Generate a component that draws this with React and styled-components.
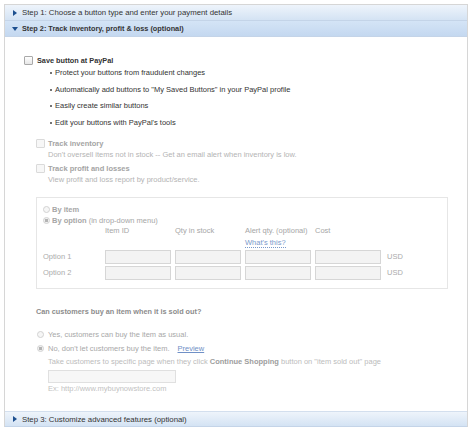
import React from "react";
import styled, { createGlobalStyle, css } from "styled-components";

const GlobalStyle = createGlobalStyle`
  html, body { margin: 0; padding: 0; background: #fff; }
  body {
    font-family: "Liberation Sans", Arial, sans-serif;
    font-size: 7.5px;
    color: #333;
  }
  * { box-sizing: border-box; }
`;

const Page = styled.div`
  padding: 4px 0 0 4px;
`;

const Frame = styled.div`
  width: 464px;
  height: 423px;
  border: 1px solid #d6d6d6;
  border-bottom: none;
  display: flex;
  flex-direction: column;
`;

const StepHeader = styled.div`
  display: flex;
  align-items: center;
  gap: 2px;
  height: 16px;
  padding-left: 5px;
  font-size: ${(p) => (p.$active ? "7.3px" : "7.8px")};
  font-weight: ${(p) => (p.$active ? 700 : 400)};
  color: #333;
  background: ${(p) =>
    p.$active
      ? "linear-gradient(#d4e4f6, #c4d8f0)"
      : "linear-gradient(#eef4fb, #d4e3f4)"};
  border-bottom: 1px solid #c4d4e8;
  ${(p) =>
    p.$top &&
    css`
      border-top: 1px solid #d3dfee;
    `}
`;

const ArrowBox = styled.span`
  width: 10px;
  height: 10px;
  display: flex;
  align-items: center;
  justify-content: center;
  flex-shrink: 0;
`;

const Triangle = styled.span`
  width: 0;
  height: 0;
  ${(p) =>
    p.$down
      ? css`
          border-left: 3.5px solid transparent;
          border-right: 3.5px solid transparent;
          border-top: 4px solid #1d4f8f;
        `
      : css`
          border-top: 3.5px solid transparent;
          border-bottom: 3.5px solid transparent;
          border-left: 4px solid #1d4f8f;
        `}
`;

const Content = styled.div`
  flex: 1;
  padding: 18px 0 0 19px;
`;

const SaveRow = styled.div`
  display: flex;
  align-items: center;
  gap: 4px;
  height: 10px;
  font-weight: 700;
  font-size: 7.3px;
  color: #333;
`;

const Checkbox = styled.span`
  width: 9px;
  height: 9px;
  flex-shrink: 0;
  border-radius: 1px;
  border: 1px solid ${(p) => (p.$disabled ? "#dadada" : "#a9a9a9")};
  background: ${(p) =>
    p.$disabled ? "#f7f7f7" : "linear-gradient(#ffffff, #e6e6e6)"};
  margin-top: ${(p) => p.$offset || 0}px;
`;

const BulletList = styled.ul`
  margin: 0;
  padding: 0 0 0 31px;
  list-style: none;
`;

const Bullet = styled.li`
  display: flex;
  align-items: center;
  line-height: 16.5px;
  color: #333;
  &::before {
    content: "";
    width: 2px;
    height: 2px;
    border-radius: 50%;
    background: #444;
    margin-left: -5px;
    margin-right: 3px;
  }
`;

const TrackOption = styled.div`
  display: flex;
  gap: 3px;
  margin: ${(p) => p.$gap}px 0 0 12px;
`;

const TrackText = styled.div`
  display: flex;
  flex-direction: column;
`;

const TrackTitle = styled.div`
  font-weight: 700;
  color: #a4a4a4;
  line-height: 11px;
`;

const TrackSub = styled.div`
  color: #b4b4b4;
  line-height: 11px;
`;

const OptionsBox = styled.div`
  margin: 12px 0 0 12px;
  width: 412px;
  border: 1px solid #e6e6e6;
  padding: 5.5px 0 8.5px 6px;
`;

const RadioRow = styled.div`
  display: flex;
  align-items: center;
  gap: ${(p) => p.$gap || 2}px;
  height: 11px;
  color: ${(p) => p.$color || "#a6a6a6"};
  margin-top: ${(p) => p.$mt || 0}px;
  margin-left: ${(p) => p.$ml || 0}px;
`;

const Radio = styled.span`
  width: 7px;
  height: 7px;
  flex-shrink: 0;
  border-radius: 50%;
  border: 1px solid #d2d2d2;
  background: ${(p) =>
    p.$checked
      ? "radial-gradient(circle, #b3b3b3 0 1.4px, #f1f1f1 1.9px)"
      : "#f6f6f6"};
`;

const Strong = styled.b`
  font-weight: 700;
  color: ${(p) => p.$color || "inherit"};
`;

const OptionGrid = styled.div`
  display: grid;
  grid-template-columns: 58px repeat(4, 66px) auto;
  grid-template-rows: 10px 10px 14px 14px;
  column-gap: 4px;
  row-gap: 2px;
  align-items: center;
  color: #a6a6a6;
`;

const ColHead = styled.div`
  grid-column: ${(p) => p.$col};
  line-height: 10px;
  white-space: nowrap;
`;

const WhatsThis = styled.a`
  grid-column: 4;
  justify-self: start;
  color: #7a9acb;
  text-decoration: none;
  border-bottom: 1px dotted #7a9acb;
  line-height: 9px;
`;

const RowLabel = styled.div`
  grid-column: 1;
  color: #ababab;
`;

const FieldInput = styled.input`
  appearance: none;
  margin: 0;
  padding: 0;
  width: ${(p) => p.$w || 66}px;
  height: ${(p) => p.$h || 14}px;
  border: 1px solid #d6d6d6;
  background: #f3f3f3;
  font: inherit;
`;

const Currency = styled.div`
  padding-left: 2px;
  color: #ababab;
`;

const Question = styled.div`
  margin: 17px 0 0 12px;
  font-weight: 700;
  font-size: 7.3px;
  color: #8c8c8c;
  line-height: 11px;
`;

const PreviewLink = styled.a`
  color: #7090c6;
  text-decoration: underline;
  margin-left: 4px;
`;

const Indented = styled.div`
  margin-left: 24px;
  display: flex;
  flex-direction: column;
  align-items: flex-start;
`;

const Hint = styled.div`
  color: ${(p) => p.$color || "#bcbcbc"};
  line-height: 11px;
  margin-top: ${(p) => p.$mt || 0}px;
`;

const UrlField = styled(FieldInput)`
  margin-top: 2.5px;
  background: #f7f7f7;
  border-color: #e0e0e0;
`;

function Step({ active, open, top, children }) {
  return (
    <StepHeader $active={active} $top={top}>
      <ArrowBox>
        <Triangle $down={open} />
      </ArrowBox>
      <span>{children}</span>
    </StepHeader>
  );
}

export default function App() {
  return (
    <>
      <GlobalStyle />
      <Page>
        <Frame>
          <Step>Step 1: Choose a button type and enter your payment details</Step>
          <Step active open>
            Step 2: Track inventory, profit &amp; loss (optional)
          </Step>
          <Content>
            <SaveRow>
              <Checkbox />
              <span>Save button at PayPal</span>
            </SaveRow>
            <BulletList>
              <Bullet>Protect your buttons from fraudulent changes</Bullet>
              <Bullet>
                Automatically add buttons to "My Saved Buttons" in your PayPal profile
              </Bullet>
              <Bullet>Easily create similar buttons</Bullet>
              <Bullet>Edit your buttons with PayPal's tools</Bullet>
            </BulletList>

            <TrackOption $gap={7}>
              <Checkbox $disabled $offset={1} />
              <TrackText>
                <TrackTitle>Track inventory</TrackTitle>
                <TrackSub>
                  Don't oversell items not in stock -- Get an email alert when inventory is low.
                </TrackSub>
              </TrackText>
            </TrackOption>
            <TrackOption $gap={3}>
              <Checkbox $disabled $offset={1} />
              <TrackText>
                <TrackTitle>Track profit and losses</TrackTitle>
                <TrackSub>View profit and loss report by product/service.</TrackSub>
              </TrackText>
            </TrackOption>

            <OptionsBox>
              <RadioRow>
                <Radio />
                <Strong>By item</Strong>
              </RadioRow>
              <RadioRow>
                <Radio $checked />
                <span>
                  <Strong>By option</Strong> (in drop-down menu)
                </span>
              </RadioRow>
              <OptionGrid>
                <ColHead $col={2}>Item ID</ColHead>
                <ColHead $col={3}>Qty in stock</ColHead>
                <ColHead $col={4}>Alert qty. (optional)</ColHead>
                <ColHead $col={5}>Cost</ColHead>
                <WhatsThis href="#">What's this?</WhatsThis>

                <RowLabel>Option 1</RowLabel>
                <FieldInput disabled />
                <FieldInput disabled />
                <FieldInput disabled />
                <FieldInput disabled />
                <Currency>USD</Currency>

                <RowLabel>Option 2</RowLabel>
                <FieldInput disabled />
                <FieldInput disabled />
                <FieldInput disabled />
                <FieldInput disabled />
                <Currency>USD</Currency>
              </OptionGrid>
            </OptionsBox>

            <Question>Can customers buy an item when it is sold out?</Question>
            <RadioRow $gap={4} $mt={12} $ml={13} $color="#a8a8a8">
              <Radio />
              <span>Yes, customers can buy the item as usual.</span>
            </RadioRow>
            <RadioRow $gap={4} $mt={3} $ml={13} $color="#a8a8a8">
              <Radio $checked />
              <span>No, don't let customers buy the item.</span>
              <PreviewLink href="#">Preview</PreviewLink>
            </RadioRow>
            <Indented>
              <Hint $mt={2}>
                Take customers to specific page when they click{" "}
                <Strong $color="#9d9d9d">Continue Shopping</Strong> button on "item sold out" page
              </Hint>
              <UrlField disabled $w={128} $h={13} />
              <Hint $color="#c2c2c2">Ex: http://www.mybuynowstore.com</Hint>
            </Indented>
          </Content>
          <Step top>Step 3: Customize advanced features (optional)</Step>
        </Frame>
      </Page>
    </>
  );
}
